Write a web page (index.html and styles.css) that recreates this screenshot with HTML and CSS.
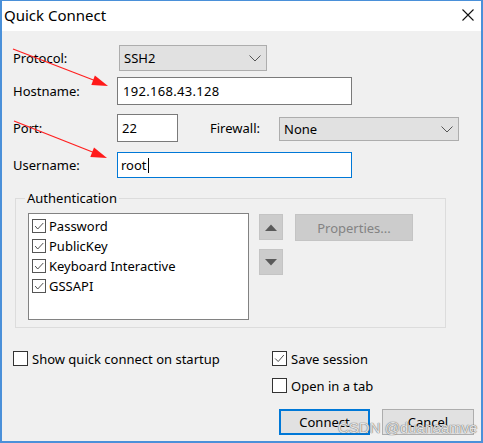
FILE: index.html
```html
<!DOCTYPE html>
<html>
<head>
<meta charset="utf-8">
<link rel="stylesheet" href="styles.css">
</head>
<body>
<div class="window">
  <div class="titlebar">
    <span class="title">Quick Connect</span>
    <svg class="close" width="12" height="12" viewBox="0 0 12 12"><path d="M0.5 0.5 L11.5 11.5 M11.5 0.5 L0.5 11.5" stroke="#111" stroke-width="1.1" fill="none"/></svg>
  </div>
  <div class="body">
    <div class="row row-proto">
      <span class="label">Protocol:</span>
      <div class="select select-proto"><span>SSH2</span><svg width="12" height="7" viewBox="0 0 12 7"><path d="M0.5 0.5 L6 6 L11.5 0.5" stroke="#555" fill="none"/></svg></div>
    </div>
    <div class="row row-host">
      <span class="label">Hostname:</span>
      <div class="input input-wide host">192.168.43.128</div>
    </div>
    <div class="row row-port">
      <span class="label">Port:</span>
      <div class="input input-port">22</div>
      <span class="label-fw">Firewall:</span>
      <div class="select select-fw"><span>None</span><svg width="12" height="7" viewBox="0 0 12 7"><path d="M0.5 0.5 L6 6 L11.5 0.5" stroke="#555" fill="none"/></svg></div>
    </div>
    <div class="row row-user">
      <span class="label">Username:</span>
      <div class="input input-wide focused">root<span class="caret"></span></div>
    </div>

    <fieldset class="group">
      <legend>Authentication</legend>
      <div class="group-inner">
        <div class="listbox">
          <div class="item"><span class="cb cb-sm"><svg viewBox="0 0 14 14"><path d="M2.5 7 L5.5 10.5 L12 3.5" stroke="#444" stroke-width="1.1" fill="none"/></svg></span>Password</div>
          <div class="item"><span class="cb cb-sm"><svg viewBox="0 0 14 14"><path d="M2.5 7 L5.5 10.5 L12 3.5" stroke="#444" stroke-width="1.1" fill="none"/></svg></span>PublicKey</div>
          <div class="item"><span class="cb cb-sm"><svg viewBox="0 0 14 14"><path d="M2.5 7 L5.5 10.5 L12 3.5" stroke="#444" stroke-width="1.1" fill="none"/></svg></span>Keyboard Interactive</div>
          <div class="item"><span class="cb cb-sm"><svg viewBox="0 0 14 14"><path d="M2.5 7 L5.5 10.5 L12 3.5" stroke="#444" stroke-width="1.1" fill="none"/></svg></span>GSSAPI</div>
        </div>
        <div class="arrows">
          <div class="btn-arrow"><svg width="12" height="7" viewBox="0 0 12 7"><path d="M0 7 L6 0.5 L12 7 Z" fill="#5a5a5a"/></svg></div>
          <div class="btn-arrow down"><svg width="12" height="7" viewBox="0 0 12 7"><path d="M0 0 L12 0 L6 6.5 Z" fill="#5a5a5a"/></svg></div>
        </div>
        <div class="btn-props">Properties...</div>
      </div>
    </fieldset>

    <div class="bottom">
      <div class="col-left">
        <div class="check"><span class="cb"></span>Show quick connect on startup</div>
      </div>
      <div class="col-right">
        <div class="check"><span class="cb"><svg viewBox="0 0 15 15"><path d="M2.5 7.5 L6 11 L12.5 3.5" stroke="#444" stroke-width="1.1" fill="none"/></svg></span>Save session</div>
        <div class="check check-tab"><span class="cb"></span>Open in a tab</div>
        <div class="buttons">
          <div class="btn btn-default">Connect</div>
          <div class="btn">Cancel</div>
        </div>
      </div>
    </div>
  </div>

  <svg class="annot" width="483" height="443" viewBox="0 0 483 443">
    <line x1="13" y1="49" x2="96" y2="81" stroke="#ff2020" stroke-width="1.3"/>
    <polygon points="108,86 94.9,75.5 91.3,84.9" fill="#ff1a1a"/>
    <line x1="14" y1="121" x2="95" y2="153" stroke="#ff2020" stroke-width="1.3"/>
    <polygon points="107,158 94,147.5 90.3,156.9" fill="#ff1a1a"/>
  </svg>
  <div class="watermark">CSDN @duansamve</div>
</div>
</body>
</html>
```
FILE: styles.css
```css
* { box-sizing: border-box; }
html, body { margin: 0; padding: 0; }
body {
  width: 483px;
  height: 443px;
  overflow: hidden;
  font-family: "Noto Sans", "Open Sans", sans-serif;
  font-size: 13px;
  color: #000;
}
.window {
  position: relative;
  width: 483px;
  height: 443px;
  border: 2px solid #4a90d9;
  border-top-width: 1px;
  background: #f0f0f0;
  display: flex;
  flex-direction: column;
}
.titlebar {
  height: 30px;
  background: #fff;
  display: flex;
  align-items: center;
  justify-content: space-between;
  padding: 0 7px 0 2px;
  flex: none;
}
.title { font-size: 15px; line-height: 20px; margin-top: -2px; }
.close { display: block; margin-top: -3px; }

.body { padding: 14px 0 0 11px; flex: 1; }

.row { display: flex; align-items: center; }
.label { width: 104px; line-height: 16px; }
.row-host { margin-top: 6px; }
.row-port { margin-top: 9px; }
.row-user { margin-top: 10px; }

.select {
  background: #e1e1e1;
  border: 1px solid #adadad;
  display: flex;
  align-items: center;
  justify-content: space-between;
  padding: 0 5px 0 4px;
}
.select svg { display: block; }
.select-proto { width: 148px; height: 26px; margin-left: 2px; }
.select-fw { width: 180px; height: 24px; margin-top: 2px; }

.input {
  background: #fff;
  border: 1px solid #7a7a7a;
  display: flex;
  align-items: center;
  padding-left: 4px;
}
.input-wide { width: 235px; }
.host { height: 28px; padding-left: 5px; letter-spacing: 0.3px; }
.input-port { width: 61px; height: 28px; }
.focused { height: 26px; border-color: #0078d7; padding-left: 3px; }
.caret { display: inline-block; width: 1px; height: 15px; background: #000; margin-left: 1px; }
.label-fw { width: 69px; margin-left: 32px; }

.group {
  margin: 12px 0 0 2px;
  width: 431px;
  border: 1px solid #dcdcdc;
  padding: 0 0 7px 9px;
}
.group legend { padding: 0 2px; line-height: 17px; }
.group-inner { display: flex; align-items: flex-start; margin: 6px 0 0 3px; }

.listbox {
  width: 221px;
  height: 107px;
  background: #fff;
  border: 1px solid #828282;
  padding: 2px 0 0 3px;
}
.item { height: 20px; display: flex; align-items: center; }
.cb {
  width: 15px;
  height: 15px;
  flex: none;
  border: 1px solid #333;
  background: #fff;
  margin-right: 4px;
  display: block;
}
.cb svg { display: block; width: 100%; height: 100%; }
.cb-sm { width: 14px; height: 14px; margin-right: 3px; border-color: #555; }

.arrows { margin-left: 10px; margin-top: 1px; display: flex; flex-direction: column; gap: 9px; }
.btn-arrow {
  width: 24px;
  height: 26px;
  background: #cccccc;
  border: 1px solid #c4c4c4;
  display: flex;
  align-items: center;
  justify-content: center;
}
.btn-arrow svg { display: block; }
.btn-props {
  margin-left: 12px;
  margin-top: 1px;
  width: 118px;
  height: 27px;
  background: #cccccc;
  border: 1px solid #c4c4c4;
  color: #838383;
  display: flex;
  align-items: center;
  justify-content: center;
}

.bottom { display: grid; grid-template-columns: 259px 1fr; margin-top: 23px; }
.check { display: flex; align-items: center; height: 15px; }
.check-tab { margin-top: 12px; }
.buttons { display: flex; gap: 12px; margin: 16px 0 0 7px; }
.btn {
  width: 92px;
  height: 26px;
  background: #e1e1e1;
  border: 1px solid #adadad;
  display: flex;
  align-items: center;
  justify-content: center;
}
.btn-default { width: 91px; border: 2px solid #0078d7; }

.annot { position: absolute; left: -2px; top: -1px; pointer-events: none; }
.watermark {
  position: absolute;
  left: 336px;
  top: 418px;
  font-family: "Liberation Sans", Arial, sans-serif;
  font-size: 15px;
  color: rgba(250, 250, 250, 0.85);
  text-shadow: 0 0 1px #6a6a6a, 0 0 1px #6a6a6a;
  pointer-events: none;
  white-space: nowrap;
}
```
